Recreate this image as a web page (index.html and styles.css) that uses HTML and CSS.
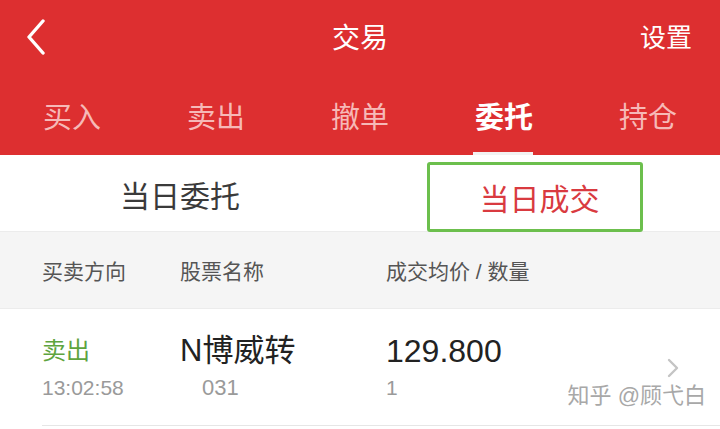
FILE: index.html
```html
<!DOCTYPE html>
<html lang="zh">
<head>
    <meta charset="UTF-8">
    <title>交易</title>
    <link rel="stylesheet" href="styles.css">
</head>
<body>
    <div class="page">
        <div class="topbar">
            <div class="nav">
                <span class="back">
                    <svg width="22" height="36" viewBox="0 0 22 36">
                        <polyline points="18,2 4,18 18,34" fill="none" stroke="#fff" stroke-width="3.4" stroke-linecap="round" stroke-linejoin="round"/>
                    </svg>
                </span>
                <span class="title">交易</span>
                <span class="settings">设置</span>
            </div>
            <div class="tabs">
                <div class="tab">买入</div>
                <div class="tab">卖出</div>
                <div class="tab">撤单</div>
                <div class="tab active">委托</div>
                <div class="tab">持仓</div>
            </div>
        </div>
        <div class="segment">
            <div class="seg-item">当日委托</div>
            <div class="seg-item"><span class="seg-box">当日成交</span></div>
        </div>
        <div class="head-row">
            <div>买卖方向</div>
            <div>股票名称</div>
            <div>成交均价 / 数量</div>
        </div>
        <div class="row">
            <div class="cell">
                <div class="side">卖出</div>
                <div class="sub">13:02:58</div>
            </div>
            <div class="cell">
                <div class="name">N博威转</div>
                <div class="sub code">031</div>
            </div>
            <div class="cell">
                <div class="price">129.800</div>
                <div class="sub">1</div>
            </div>
            <div class="arrow">
                <svg width="14" height="22" viewBox="0 0 14 22">
                    <polyline points="3,3 11,11 3,19" fill="none" stroke="#c4c4c4" stroke-width="2.4" stroke-linecap="round" stroke-linejoin="round"/>
                </svg>
            </div>
            <div class="watermark">知乎 @顾弋白</div>
        </div>
    </div>
</body>
</html>
```

FILE: styles.css
```css
body {
    margin: 0;
    font-family: "Liberation Sans", "Noto Sans CJK SC", sans-serif;
    background: #fff;
}
.page {
    width: 720px;
    height: 429px;
    overflow: hidden;
}
.topbar {
    background: #dd2f30;
    color: #fff;
}
.nav {
    height: 75px;
    display: grid;
    grid-template-columns: 1fr auto 1fr;
    align-items: center;
    padding-bottom: 4px;
    box-sizing: border-box;
}
.back {
    padding-left: 25px;
    padding-top: 3px;
    display: flex;
}
.title {
    font-size: 28px;
}
.settings {
    justify-self: end;
    padding-right: 28px;
    font-size: 26px;
}
.tabs {
    height: 80px;
    display: grid;
    grid-template-columns: repeat(5, 1fr);
}
.tab {
    position: relative;
    display: flex;
    align-items: center;
    justify-content: center;
    font-size: 29px;
    color: #f6b9b7;
}
.tab.active {
    color: #fff;
    font-weight: bold;
}
.tab.active::after {
    content: "";
    position: absolute;
    left: 41px;
    bottom: 0;
    width: 60px;
    height: 3px;
    background: #f2f2f2;
}
.segment {
    height: 77px;
    display: grid;
    grid-template-columns: 1fr 1fr;
    border-bottom: 1px solid #ececec;
    box-sizing: border-box;
}
.seg-item {
    display: flex;
    align-items: center;
    justify-content: center;
    font-size: 30px;
    color: #3a3a3a;
}
.seg-box {
    color: #d93a40;
    border: 3px solid #6cbf4d;
    border-radius: 3px;
    padding: 10px 40px 10px 50px;
    margin-left: -11px;
    margin-top: 7px;
}
.head-row {
    height: 76px;
    background: #f5f5f5;
    display: grid;
    grid-template-columns: 138px 206px 1fr;
    align-items: center;
    padding-left: 42px;
    font-size: 21px;
    color: #555;
    border-bottom: 1px solid #ececec;
}
.row {
    position: relative;
    height: 116px;
    margin-left: 42px;
    display: grid;
    grid-template-columns: 138px 206px 1fr 56px;
    align-items: center;
    border-bottom: 1px solid #e6e6e6;
}
.cell {
    display: flex;
    flex-direction: column;
    gap: 6px;
    padding-top: 2px;
}
.side {
    font-size: 24px;
    color: #5ea43e;
    line-height: 34px;
}
.name {
    font-size: 31px;
    color: #222;
    line-height: 34px;
}
.price {
    font-size: 32px;
    color: #222;
    line-height: 34px;
}
.sub {
    font-size: 21px;
    color: #9a9a9a;
    line-height: 28px;
}
.code {
    padding-left: 22px;
    font-size: 22px;
}
.arrow {
    display: flex;
    padding-top: 2px;
    padding-left: 2px;
}
.watermark {
    position: absolute;
    right: 14px;
    bottom: 16px;
    font-size: 22px;
    color: #a8a8a8;
    text-shadow: 0 0 2px #fff;
}
```
